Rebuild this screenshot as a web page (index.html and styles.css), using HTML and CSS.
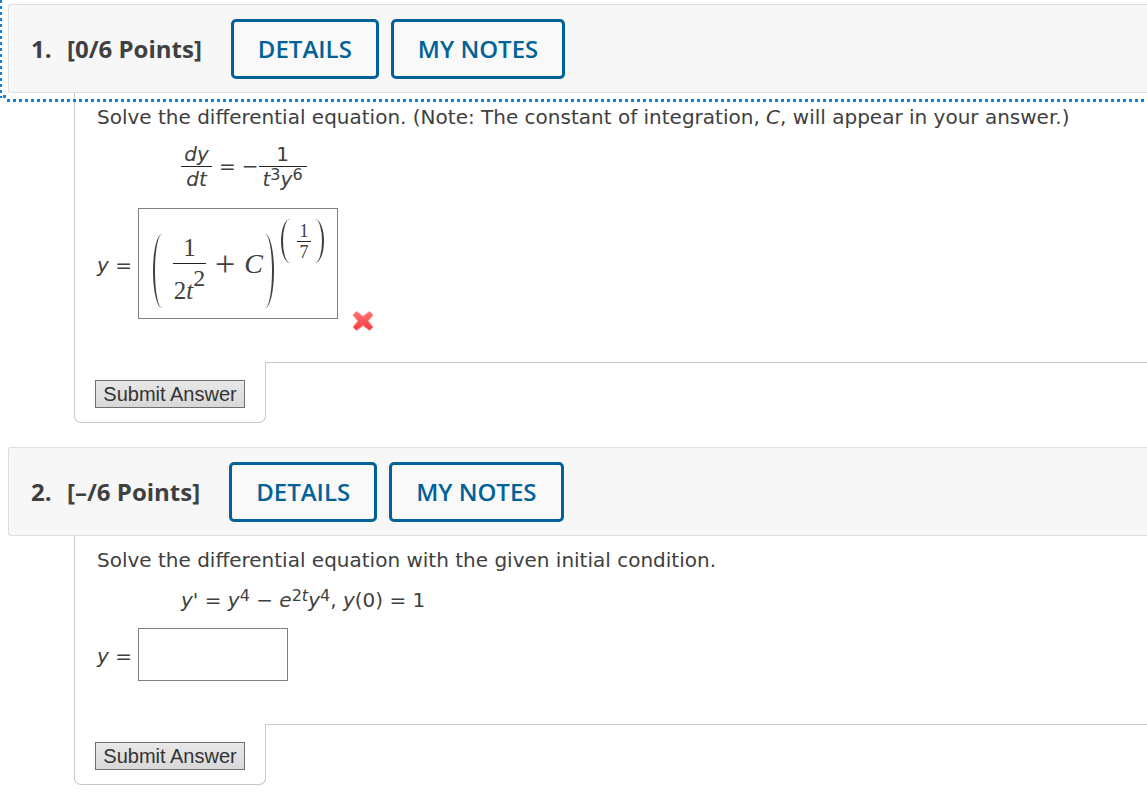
FILE: index.html
```html
<!DOCTYPE html>
<html lang="en">
<head>
    <meta charset="UTF-8">
    <meta name="viewport" content="width=device-width, initial-scale=1.0">
    <title>Differential Equations</title>
    <link rel="stylesheet" href="styles.css">
</head>
<body>
    <form class="question">
        <div class="header focused">
            <span class="number">1.</span>
            <strong class="points">[0/6 Points]</strong>
            <button type="button" class="btn">DETAILS</button>
            <button type="button" class="btn">MY NOTES</button>
        </div>
        <div class="content">
            <p>Solve the differential equation. (Note: The constant of integration, <i>C</i>, will appear in your answer.)</p>
            <div class="equation">
                <span class="fraction"><i class="top">dy</i><i>dt</i></span>
                <span class="equals">=</span>
                <span>−</span>
                <span class="fraction wide"><span class="top">1</span><span><i>t</i><sup>3</sup><i>y</i><sup>6</sup></span></span>
            </div>
            <div class="answer">
                <span class="label"><i>y</i> =</span>
                <div class="math-box">
                    <div class="base">
                        <span class="paren left"></span>
                        <span class="fraction serif"><span class="top">1</span><span class="bottom">2<i>t</i><sup>2</sup></span></span>
                        <span class="plus">+</span>
                        <i class="constant">C</i>
                        <span class="paren right"></span>
                    </div>
                    <div class="exponent">
                        <span class="paren left"></span>
                        <span class="fraction small"><span class="top">1</span><span>7</span></span>
                        <span class="paren right"></span>
                    </div>
                </div>
                <svg class="wrong" viewBox="0 0 22 22" role="img" aria-label="Incorrect">
                    <defs>
                        <linearGradient id="red" x1="0" y1="0" x2="0" y2="1">
                            <stop offset="0" stop-color="#ff7474"/>
                            <stop offset="1" stop-color="#f5393f"/>
                        </linearGradient>
                    </defs>
                    <path fill="url(#red)" stroke="#ff8a8a" stroke-linejoin="round" d="M4.500 1.500 11 6.500l6.500-5 3.500 3.500L16 11l5 6-3.500 3.500L11 15.500l-6.500 5L1 17 6 11 1 5Z"/>
                </svg>
            </div>
        </div>
        <div class="footer">
            <div class="tab"><button class="submit">Submit Answer</button></div>
            <div class="line"></div>
        </div>
    </form>

    <form class="question">
        <div class="header">
            <span class="number">2.</span>
            <strong class="points">[–/6 Points]</strong>
            <button type="button" class="btn">DETAILS</button>
            <button type="button" class="btn">MY NOTES</button>
        </div>
        <div class="content">
            <p>Solve the differential equation with the given initial condition.</p>
            <div class="equation inline">
                <span><i>y</i>' = <i>y</i><sup>4</sup> − <i>e</i><sup>2<i>t</i></sup><i>y</i><sup>4</sup>, <i>y</i>(0) = 1</span>
            </div>
            <div class="answer">
                <label class="label" for="answer2"><i>y</i> =</label>
                <input type="text" id="answer2" class="math-input">
            </div>
        </div>
        <div class="footer">
            <div class="tab"><button class="submit">Submit Answer</button></div>
            <div class="line"></div>
        </div>
    </form>
</body>
</html>
```

FILE: styles.css
```css
* {
    box-sizing: border-box;
}

body {
    margin: 0;
    padding: 4px 0 0 8px;
    background-color: #fff;
    color: #404040;
    font-family: Verdana, "DejaVu Sans", sans-serif;
    font-size: 20px;
    line-height: 24px;
}

.question {
    margin-bottom: 24px;
}

/* Header bar */
.header {
    position: relative;
    display: flex;
    align-items: center;
    padding: 14px 22px 13px;
    background-color: #f7f7f7;
    border: 1px solid #dedede;
    border-right: none;
    border-radius: 3px 0 0 3px;
    font-family: "Open Sans", sans-serif;
    font-size: 24px;
    font-weight: 700;
}

/* Dotted focus ring: left side with the corner dot, then the bottom side */
.header.focused::before,
.header.focused::after {
    content: "";
    position: absolute;
    pointer-events: none;
}

.header.focused::before {
    top: -5px;
    bottom: -6px;
    left: -9px;
    width: 6px;
    background:
        linear-gradient(#0f80e0, #0f80e0) right bottom / 3px 3px no-repeat,
        linear-gradient(#0f80e0 50%, transparent 50%) left top / 2px 6px repeat-y;
}

.header.focused::after {
    right: 0;
    bottom: -10px;
    left: -2px;
    height: 3px;
    background: linear-gradient(90deg, #0f80e0 50%, transparent 50%) left top / 6px 3px repeat-x;
}

.number {
    width: 36px;
}

.points {
    margin-right: 29px;
    font-weight: 700;
}

.btn {
    height: 60px;
    margin-right: 12px;
    padding: 0 24px 2px;
    background-color: #f9f9f9;
    border: 3px solid #006298;
    border-radius: 5px;
    color: #006298;
    font-family: inherit;
    font-size: 24px;
    font-weight: 600;
    cursor: pointer;
}

/* Question body */
.content {
    margin-left: 66px;
    padding: 12px 22px 43px;
    border-left: 1px solid #c8c8c8;
}

.content p {
    margin: 0;
}

.equation {
    display: flex;
    align-items: center;
    height: 52px;
    margin: 11px 0 16px 84px;
}

.equation.inline {
    height: 24px;
    margin: 16px 0 16px 84px;
}

.equals {
    margin: 0 6px 0 7px;
}

sup {
    font-size: 16px;
    line-height: 0;
    vertical-align: 6px;
}

.fraction {
    display: flex;
    flex-direction: column;
    align-items: center;
    min-width: 31px;
}

.fraction .top {
    align-self: stretch;
    border-bottom: 1px solid #222;
    text-align: center;
}

.fraction.wide {
    min-width: 48px;
}

.answer {
    display: flex;
    align-items: center;
}

.label {
    width: 41px;
    padding-top: 3px;
    white-space: nowrap;
}

/* Rendered answer */
.math-box {
    display: flex;
    width: 200px;
    height: 111px;
    padding: 10px 14px;
    border: 1px solid #808080;
    font-family: "Liberation Serif", serif;
    font-size: 25px;
}

.base,
.exponent {
    display: flex;
    align-items: center;
}

.base {
    align-self: flex-end;
    height: 74px;
}

.exponent {
    height: 44px;
    margin-left: 7px;
    font-size: 18px;
}

.paren {
    align-self: stretch;
    width: 9px;
    border: 0 solid #404040;
}

.paren.left {
    border-left-width: 2px;
    border-radius: 100% 0 0 100% / 50% 0 0 50%;
}

.paren.right {
    border-right-width: 2px;
    border-radius: 0 100% 100% 0 / 0 50% 50% 0;
}

.serif {
    min-width: 33px;
    margin-left: 11px;
    padding-bottom: 4px;
    line-height: 30px;
}

.serif .bottom {
    padding-top: 12px;
}

.serif sup {
    font-size: 24px;
    vertical-align: 13px;
}

.small {
    min-width: 14px;
    margin: 0 4px 0 7px;
    line-height: 20px;
}

.plus,
.constant {
    padding-bottom: 14px;
}

.plus {
    margin: 0 9px;
    font-size: 36px;
}

.constant {
    margin-right: 2px;
    font-size: 28px;
}

.wrong {
    align-self: flex-end;
    width: 22px;
    height: 22px;
    margin: 0 0 -13px 14px;
}

.math-input {
    width: 150px;
    height: 53px;
    padding: 8px;
    border: 1px solid #808080;
    font-family: "Liberation Serif", serif;
    font-size: 25px;
}

/* Submit tab */
.footer {
    display: flex;
    margin-left: 66px;
}

.tab {
    width: 192px;
    padding: 18px 20px 14px;
    border: 1px solid #c8c8c8;
    border-top: none;
    border-radius: 0 0 7px 7px;
}

.line {
    flex: 1;
    border-top: 1px solid #c8c8c8;
}

.submit {
    display: block;
    width: 150px;
    height: 28px;
    padding: 0;
    background: linear-gradient(#e8e8e8, #d8d8d8);
    border: 1px solid #707070;
    color: #333;
    font-family: "Liberation Sans", Arial, sans-serif;
    font-size: 20px;
    line-height: 24px;
}
```
